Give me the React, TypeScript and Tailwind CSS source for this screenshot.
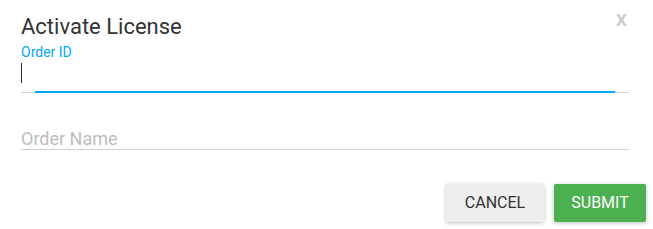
export default function App() {
  return (
    <div className="relative h-[229px] w-[653px] overflow-hidden bg-white font-['Roboto',sans-serif]">
      <button className="absolute left-[616px] top-[10px] text-[17px] font-bold leading-[20px] text-[#cccccc]">
        X
      </button>

      <div className="pl-[21px] pr-[24px] pt-[14px]">
        <h2 className="text-[22px] leading-[26px] text-[#333333]">Activate License</h2>

        <label className="mt-[4px] block text-[14px] leading-[16px] text-[#03a9f4]">Order ID</label>
        <div className="relative h-[33px] border-b border-[#d0d0d0] pt-[3px]">
          <div className="h-[20px] w-px bg-[#333333]" />
          <span className="absolute bottom-[-1px] left-[14px] right-[14px] h-[2px] bg-[#03a9f4]" />
        </div>

        <div className="mt-[35px] h-[22px] border-b border-[#d0d0d0] text-[18px] leading-[21px] text-[#bdbdbd]">
          Order Name
        </div>
      </div>

      <div className="mt-[34px] flex justify-end gap-[10px] pr-[7px]">
        <button className="h-[38px] w-[98px] rounded-[2px] bg-[#eeeeee] text-[16px] uppercase text-[#333333] shadow-[0_1px_4px_rgba(0,0,0,0.25)]">
          Cancel
        </button>
        <button className="h-[38px] w-[92px] rounded-[2px] bg-[#4caf50] text-[16px] uppercase text-white shadow-[0_1px_4px_rgba(0,0,0,0.25)]">
          Submit
        </button>
      </div>
    </div>
  );
}
